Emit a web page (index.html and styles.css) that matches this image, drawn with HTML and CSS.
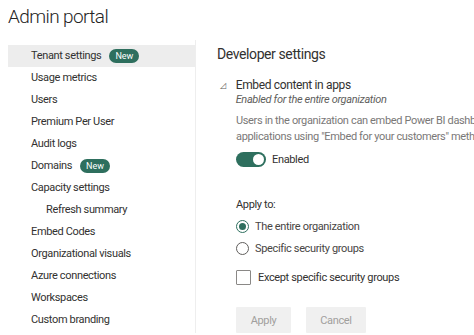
FILE: index.html
```html
<!DOCTYPE html>
<html lang="en">
<head>
    <meta charset="UTF-8">
    <meta name="viewport" content="width=device-width, initial-scale=1.0">
    <title>Admin portal</title>
    <link rel="stylesheet" href="styles.css">
</head>
<body>
    <h1 class="title">Admin portal</h1>

    <div class="layout">
        <nav class="sidebar">
            <div class="nav-item active">Tenant settings <span class="badge">New</span></div>
            <div class="nav-item">Usage metrics</div>
            <div class="nav-item">Users</div>
            <div class="nav-item">Premium Per User</div>
            <div class="nav-item">Audit logs</div>
            <div class="nav-item">Domains <span class="badge">New</span></div>
            <div class="nav-item">Capacity settings</div>
            <div class="nav-item sub">Refresh summary</div>
            <div class="nav-item">Embed Codes</div>
            <div class="nav-item">Organizational visuals</div>
            <div class="nav-item">Azure connections</div>
            <div class="nav-item">Workspaces</div>
            <div class="nav-item">Custom branding</div>
        </nav>

        <main class="content">
            <h2 class="section-title">Developer settings</h2>

            <div class="setting">
                <div class="setting-head">
                    <span class="caret">&#x25FF;</span>
                    <div>
                        <div class="setting-name">Embed content in apps</div>
                        <div class="setting-state">Enabled for the entire organization</div>
                    </div>
                </div>

                <div class="setting-body">
                    <p class="desc">Users in the organization can embed Power BI dashboards and reports in Web<br>applications using "Embed for your customers" method.</p>

                    <div class="toggle-row">
                        <span class="toggle"><span class="knob"></span></span>
                        <span>Enabled</span>
                    </div>

                    <div class="apply-label">Apply to:</div>

                    <div class="option first">
                        <span class="radio checked"></span>
                        <span>The entire organization</span>
                    </div>
                    <div class="option">
                        <span class="radio"></span>
                        <span>Specific security groups</span>
                    </div>
                    <div class="option check-option">
                        <span class="checkbox"></span>
                        <span>Except specific security groups</span>
                    </div>

                    <div class="actions">
                        <button class="btn apply" disabled>Apply</button>
                        <button class="btn cancel" disabled>Cancel</button>
                    </div>
                </div>
            </div>
        </main>
    </div>
</body>
</html>
```

FILE: styles.css
```css
html, body {
    margin: 0;
    padding: 0;
    overflow: hidden;
}

body {
    font-family: 'Roboto', 'Lato', sans-serif;
    color: #323130;
    background: #ffffff;
    font-size: 11px;
    letter-spacing: -0.35px;
}

.title {
    font-size: 19px;
    font-weight: 300;
    letter-spacing: -0.6px;
    margin: 0;
    padding: 4px 0 0 8px;
    line-height: 26px;
    color: #252423;
}

.layout {
    display: flex;
    margin-top: 10px;
}

.sidebar {
    width: 187px;
    margin-left: 8px;
    padding-top: 5px;
    border-right: 1px solid #eeeeee;
    flex-shrink: 0;
}

.nav-item {
    height: 22px;
    line-height: 22px;
    padding-left: 23px;
    white-space: nowrap;
    display: flex;
    align-items: center;
    gap: 8px;
}

.nav-item.active {
    background: #ededed;
}

.nav-item.sub {
    padding-left: 38px;
}

.badge {
    background: #2e6f5e;
    color: #ffffff;
    font-size: 9px;
    letter-spacing: 0;
    line-height: 14px;
    height: 14px;
    padding: 0 6px;
    border-radius: 8px;
}

.content {
    padding-left: 21px;
    padding-top: 4px;
    white-space: nowrap;
}

.section-title {
    font-size: 14px;
    font-weight: 400;
    letter-spacing: -0.4px;
    margin: 0;
    line-height: 20px;
}

.setting {
    margin-top: 13px;
}

.setting-head {
    display: flex;
    gap: 10px;
}

.caret {
    font-size: 8px;
    color: #605e5c;
    line-height: 18px;
    padding-left: 3px;
}

.setting-name {
    font-size: 12px;
    line-height: 16px;
}

.setting-state {
    font-style: italic;
    color: #605e5c;
    line-height: 14px;
}

.setting-body {
    padding-left: 19px;
}

.desc {
    margin: 6px 0 0;
    color: #7a7877;
    line-height: 16px;
}

.toggle-row {
    display: flex;
    align-items: center;
    gap: 6px;
    margin-top: 7px;
}

.toggle {
    width: 30px;
    height: 15px;
    border-radius: 8px;
    background: #2e6f5e;
    display: flex;
    align-items: center;
    justify-content: flex-end;
    padding-right: 2px;
    box-sizing: border-box;
}

.knob {
    width: 11px;
    height: 11px;
    border-radius: 50%;
    background: #ffffff;
}

.apply-label {
    margin-top: 30px;
    line-height: 16px;
}

.option {
    display: flex;
    align-items: center;
    gap: 6px;
    margin-top: 6px;
    height: 16px;
    color: #484644;
}

.option.first {
    margin-top: 5px;
}

.radio {
    width: 11px;
    height: 11px;
    border: 1px solid #605e5c;
    border-radius: 50%;
    display: flex;
    align-items: center;
    justify-content: center;
}

.radio.checked {
    border-color: #2e6f5e;
}

.radio.checked::after {
    content: "";
    width: 7px;
    height: 7px;
    border-radius: 50%;
    background: #2e6f5e;
}

.check-option {
    margin-top: 13px;
    gap: 7px;
    color: #323130;
}

.checkbox {
    width: 13px;
    height: 13px;
    border: 1px solid #8a8886;
    border-radius: 1px;
}

.actions {
    display: flex;
    gap: 15px;
    margin-top: 22px;
}

.btn {
    font-family: inherit;
    font-size: 11px;
    letter-spacing: inherit;
    height: 26px;
    border: none;
    background: #f0f0f0;
    color: #a19f9d;
    border-radius: 1px;
}

.apply {
    width: 55px;
}

.cancel {
    width: 60px;
}
```
